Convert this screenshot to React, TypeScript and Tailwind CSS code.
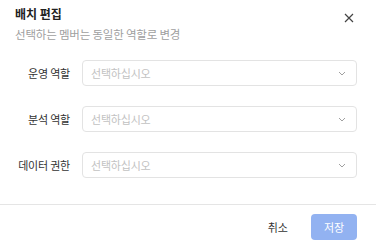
import React from "react";

const font = { fontFamily: '"Noto Sans CJK KR", "Noto Sans", sans-serif' };

function Select() {
  return (
    <div className="flex h-[26px] flex-1 items-center justify-between rounded-[4px] border border-[#e3e3e3] bg-white pl-[8px] pr-[10px]">
      <span className="text-[11px] leading-none tracking-[-0.2px] text-[#c2c2c2]">선택하십시오</span>
      <svg width="8" height="5" viewBox="0 0 8 5" fill="none">
        <path d="M1 1l3 3 3-3" stroke="#a0a0a0" strokeWidth="1" />
      </svg>
    </div>
  );
}

function Row({ label }: { label: string }) {
  return (
    <div className="flex items-center">
      <div className="w-[70px] text-right text-[11px] tracking-[-0.2px] text-[#333]">{label}</div>
      <div className="ml-[12px] flex flex-1">
        <Select />
      </div>
    </div>
  );
}

export default function App() {
  return (
    <div className="h-[244px] w-[376px] bg-white" style={font}>
      <div className="flex items-start justify-between pl-[15px] pr-[22px] pt-[5px]">
        <div>
          <div className="text-[12px] font-bold leading-[18px] text-[#222]">배치 편집</div>
          <div className="mt-[3px] text-[11.5px] leading-[16px] tracking-[-0.2px] text-[#a0a0a0]">선택하는 멤버는 동일한 역할로 변경</div>
        </div>
        <svg className="mt-[8px]" width="10" height="10" viewBox="0 0 10 10" fill="none">
          <path d="M1 1l8 8M9 1l-8 8" stroke="#444" strokeWidth="1.2" />
        </svg>
      </div>
      <div className="flex flex-col gap-[20px] pr-[19px] pt-[18px]">
        <Row label="운영 역할" />
        <Row label="분석 역할" />
        <Row label="데이터 권한" />
      </div>
      <div className="mt-[26px] border-t border-[#e5e5e5]">
        <div className="flex items-center justify-end gap-[23px] pr-[19px] pt-[9px]">
          <span className="text-[11px] text-[#333]">취소</span>
          <div className="flex h-[26px] w-[46px] items-center justify-center rounded-[4px] bg-[#92b2f1] text-[11px] text-white">저장</div>
        </div>
      </div>
    </div>
  );
}
